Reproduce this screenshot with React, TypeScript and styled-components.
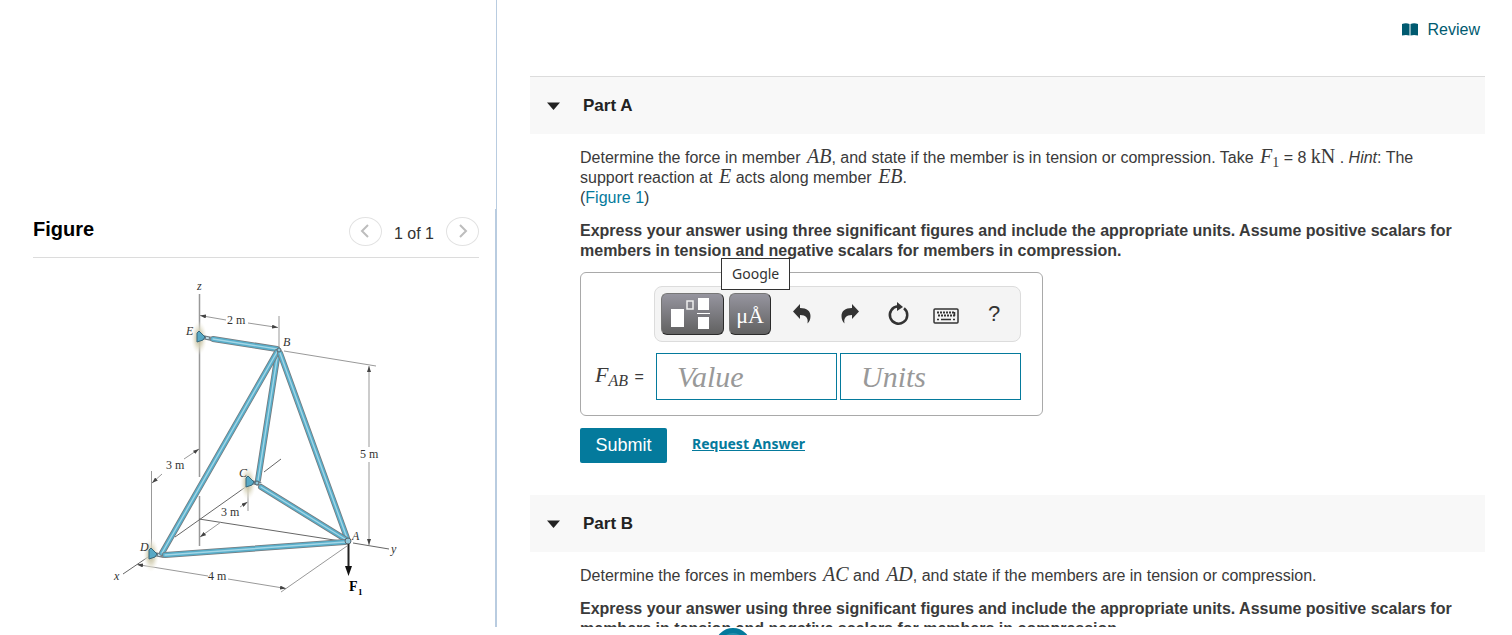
import React from "react";
import styled, { createGlobalStyle } from "styled-components";

const sans = `"Liberation Sans", Arial, sans-serif`;
const serif = `"Liberation Serif", "Times New Roman", serif`;

const GlobalStyle = createGlobalStyle`
  *, *::before, *::after { box-sizing: border-box; }
  body { margin: 0; background: #fff; color: #3a3a3a; font: 16px/20px ${sans}; overflow: hidden; }
  p, h2, h3 { margin: 0; }
  a { color: #047a9c; text-decoration: none; }
`;

const Page = styled.div`
  display: flex;
  flex-direction: column;
  height: 100vh;
`;

const Workspace = styled.div`
  display: grid;
  grid-template-columns: 497px minmax(0, 1fr);
  flex: 1;
  min-height: 0;
`;

const Sidebar = styled.aside`
  display: flex;
  flex-direction: column;
  min-height: 0;
`;

const SidebarTop = styled.div`
  height: 209px;
  border-right: 1px solid #b9cce0;
`;

const FigurePanel = styled.section`
  flex: 1;
  min-height: 0;
  padding: 0 16px 0 33px;
  border-right: 2px solid #b9cce0;
  overflow: hidden;
`;

const FigureHeader = styled.header`
  display: flex;
  align-items: center;
  justify-content: space-between;
  height: 49px;
  padding-bottom: 4px;
  border-bottom: 1px solid #dcdcdc;
`;

const FigureTitle = styled.h2`
  padding-bottom: 4px;
  font-size: 20px;
  line-height: 24px;
  color: #000;
`;

const Pager = styled.nav`
  display: flex;
  align-items: center;
  gap: 12px;
  font-size: 16px;
  color: #333;

  span { padding-top: 5px; }
`;

const PagerButton = styled.button`
  display: grid;
  place-items: center;
  width: 33px;
  height: 29px;
  padding: 0;
  border: 1px solid #e2e2e2;
  border-radius: 50%;
  background: #fff;
`;

const Diagram = styled.svg`
  display: block;
  width: 310px;
  height: 330px;
  margin: 12px 0 0 67px;
  font-family: ${serif};
  font-size: 12px;
`;

const Main = styled.main`
  min-height: 0;
  padding: 0 27px 0 33px;
  overflow: hidden;
`;

const TopBar = styled.div`
  display: flex;
  justify-content: flex-end;
  height: 76px;
  padding: 20px 5px 0 0;
`;

const ReviewLink = styled.a`
  display: flex;
  align-items: center;
  gap: 10px;
  height: 20px;
  && { color: #005a70; }
`;

const PartHeader = styled.header<{ $first?: boolean }>`
  display: flex;
  align-items: center;
  gap: 22px;
  height: ${(p) => (p.$first ? 58 : 57)}px;
  padding-left: 16px;
  background: #f8f8f8;
  border-top: ${(p) => (p.$first ? "1px solid #dcdcdc" : "0")};
`;

const PartToggle = styled.button`
  display: grid;
  place-items: center;
  width: 15px;
  height: 20px;
  padding: 0;
  border: 0;
  background: none;
`;

const PartTitle = styled.h3`
  font-size: 17px;
  line-height: 20px;
  color: #222;
`;

const PartBody = styled.div`
  padding: 14px 0 32px 50px;
`;

const Question = styled.p`
  padding-right: 24px;
`;

const Instructions = styled.p`
  margin-top: 13px;
  font-weight: bold;
`;

const Math = styled.i`
  margin-left: 2px;
  font-family: ${serif};
  font-size: 20px;
  line-height: 16px;
`;

const MathUpright = styled.span`
  font-family: ${serif};
  font-size: 20px;
  font-style: normal;
  line-height: 16px;
`;

const Sub = styled.sub<{ $size: number }>`
  font-size: ${(p) => p.$size}px;
  line-height: 0;
  vertical-align: -4px;
`;

const AnswerBox = styled.form`
  width: 463px;
  margin-top: 11px;
  padding: 13px 21px 15px 14px;
  border: 1px solid #a9a9a9;
  border-radius: 6px;
`;

const Toolbar = styled.div`
  position: relative;
  display: flex;
  align-items: center;
  height: 56px;
  margin-left: 59px;
  padding-left: 6px;
  border: 1px solid #dcdcdc;
  border-radius: 8px;
  background: #f4f4f4;
`;

const PaletteButton = styled.button<{ $width: number }>`
  display: grid;
  place-items: center;
  width: ${(p) => p.$width}px;
  height: 42px;
  margin-right: 5px;
  padding: 0;
  border: 1px solid #2b2b2b;
  border-top-color: #777;
  border-left-color: #777;
  border-radius: 6px;
  background: linear-gradient(#96959f, #616161);
  color: #fff;
  font: 22px/28px ${serif};
`;

const UnitsGlyph = styled.span`
  padding-top: 4px;
`;

const ToolButton = styled.button`
  display: grid;
  place-items: center;
  width: 48px;
  height: 42px;
  padding: 0;
  border: 0;
  background: none;
  color: #333;
  font: 22px/28px ${sans};
`;

const ToolSpacer = styled.div`
  width: 2px;
`;

const Tooltip = styled.div`
  position: absolute;
  top: -29px;
  left: 66px;
  padding: 5px 10px;
  border: 1px solid #333;
  background: #fff;
  color: #333;
  font: 14px/20px "Noto Sans", sans-serif;
`;

const Fields = styled.div`
  display: flex;
  align-items: center;
  gap: 3px;
  margin-top: 11px;
`;

const FieldLabel = styled.label`
  flex: 1;
  white-space: nowrap;
`;

const VariableName = styled.i`
  margin-right: 2px;
  font-family: ${serif};
  font-size: 22px;
  line-height: 16px;
`;

const AnswerInput = styled.input`
  width: 181px;
  height: 47px;
  padding: 0 20px;
  border: 1px solid #047a9c;
  border-radius: 0;
  background: #fff;
  font: italic 30px/36px ${serif};
  color: #333;

  &::placeholder { color: #999; opacity: 1; }
`;

const Actions = styled.div`
  display: flex;
  align-items: center;
  gap: 25px;
  margin-top: 12px;
`;

const SubmitButton = styled.button`
  width: 87px;
  height: 35px;
  padding: 0 0 2px;
  border: 0;
  border-radius: 2px;
  background: #047a9c;
  color: #fff;
  font: 18px/20px ${sans};
`;

const RequestLink = styled.a`
  padding-bottom: 4px;
  font: bold 14px/20px "Noto Sans", sans-serif;
  && { text-decoration: underline; }
`;

const BottomBar = styled.footer`
  position: relative;
  flex: 0 0 8px;
  overflow: hidden;
`;

const Loader = styled.div`
  position: absolute;
  top: 1px;
  left: 715px;
  width: 36px;
  height: 36px;
  border: 5px solid #047a9c;
  border-radius: 50%;
  background: #2590ad;
`;

type Pt = [number, number];

const Bar = ({ from, to, width = 6 }: { from: Pt; to: Pt; width?: number }) => {
  const line = { x1: from[0], y1: from[1], x2: to[0], y2: to[1] };
  return (
    <g strokeLinecap="round">
      <line {...line} stroke="#777a7d" strokeWidth={width} />
      <line {...line} stroke="#58aeca" strokeWidth={width - 1.6} />
      <line {...line} stroke="#a3d6e6" strokeWidth={1.4} />
    </g>
  );
};

const Support = ({ x, y }: { x: number; y: number }) => (
  <g>
    <ellipse cx={x} cy={y + 1} rx="8" ry="17" fill="url(#wall)" />
    <line x1={x + 3} y1={y} x2={x + 13} y2={y + 2} stroke="#6b757c" strokeWidth="4" />
    <line x1={x + 3} y1={y} x2={x + 13} y2={y + 2} stroke="#c3e0ea" strokeWidth="2" strokeDasharray="3 1" />
    <path d={`M${x - 2} ${y - 4} L${x} ${y - 6} L${x + 6} ${y} L${x + 4} ${y + 3} L${x - 2} ${y + 5} Z`} fill="#58a9c5" stroke="#37677a" />
  </g>
);

const dimensionLines = [
  "M226 320L200 315.500",
  "M248 323L278 327.500",
  "M162 474L152 483",
  "M184 459L199 449",
  "M240 507L247.500 502",
  "M221 522L200 537",
  "M208 576L137 564.500",
  "M228 579L286 588.500",
  "M369 447V366",
  "M369 462V545",
];

const Truss = () => (
  <Diagram viewBox="100 270 310 330" role="img" aria-label="Space truss with joints A, B, C, D and E">
    <defs>
      <radialGradient id="wall">
        <stop offset="0" stopColor="#b5af8a" />
        <stop offset="0.5" stopColor="#d9d5bd" stopOpacity="0.8" />
        <stop offset="1" stopColor="#f4f2e8" stopOpacity="0" />
      </radialGradient>
      <marker id="arrow" viewBox="0 0 6 4" refX="6" refY="2" markerWidth="6" markerHeight="4" markerUnits="userSpaceOnUse" orient="auto">
        <path d="M0 0L6 2L0 4Z" fill="#444" />
      </marker>
    </defs>
    <g fill="none" stroke="#999">
      <path d="M199.500 294V477M199.500 496V546" strokeWidth="1.500" />
      <path d="M151.500 471V552M279 316V350M284 351L376 366M248 486V511" />
      <path d="M281 592L347 546" />
    </g>
    <path d="M123 574L151 555M175 537L247 486M264 472L281 459M199 519L347 542M353 543L389 549" fill="none" stroke="#666" />
    <g fill="none" stroke="#999">
      {dimensionLines.map((d) => <path key={d} d={d} markerEnd="url(#arrow)" />)}
    </g>
    <Support x={199} y={337} />
    <Support x={248} y={482} />
    <Support x={151} y={554} />
    <Bar from={[213, 339]} to={[277, 349]} />
    <Bar from={[278, 352]} to={[258, 480]} />
    <Bar from={[277, 352]} to={[162, 553]} />
    <Bar from={[280, 353]} to={[347, 538]} />
    <Bar from={[261, 487]} to={[345, 539]} />
    <Bar from={[165, 555]} to={[345, 542]} />
    <circle cx="279" cy="350" r="2" fill="#90c8da" stroke="#53656e" />
    <circle cx="257" cy="483" r="2" fill="#90c8da" stroke="#53656e" />
    <circle cx="348" cy="541" r="3" fill="#90c8da" stroke="#53656e" />
    <path d="M348.500 544V568" stroke="#222" strokeWidth="2" />
    <path d="M345 566H352L348.500 576Z" fill="#111" />
    <g fill="#333">
      <g fontStyle="italic">
        <text x="197" y="290">z</text>
        <text x="186" y="335">E</text>
        <text x="283" y="346">B</text>
        <text x="239" y="477">C</text>
        <text x="140" y="551">D</text>
        <text x="352" y="540">A</text>
        <text x="391" y="553">y</text>
        <text x="114" y="580">x</text>
      </g>
      <text x="227" y="324">2 m</text>
      <text x="166" y="469">3 m</text>
      <text x="221" y="516">3 m</text>
      <text x="208" y="580">4 m</text>
      <text x="360" y="458">5 m</text>
      <text x="349" y="591" fontSize="14" fontWeight="bold" fill="#000">F</text>
      <text x="358" y="595" fontSize="9" fontWeight="bold" fill="#000">1</text>
    </g>
  </Diagram>
);

const Chevron = ({ d }: { d: string }) => (
  <svg width="10" height="14" viewBox="0 0 10 14" fill="none" stroke="#bdbdbd" strokeWidth="2" aria-hidden="true">
    <path d={d} />
  </svg>
);

const Caret = () => (
  <svg width="13" height="8" viewBox="0 0 13 8" aria-hidden="true">
    <path d="M0 0.500H13L6.500 8Z" fill="#222" />
  </svg>
);

const BookIcon = () => (
  <svg width="16" height="14" viewBox="0 0 16 14" fill="#005a70" aria-hidden="true">
    <path d="M0 1Q4 -.5 7.500 1V12.500Q4 11.500 0 12.500ZM8.500 1Q12 -.5 16 1V12.500Q12 11.500 8.500 12.500Z" />
  </svg>
);

const TemplateIcon = () => (
  <svg width="43" height="34" viewBox="0 0 43 34" aria-hidden="true">
    <path d="M0 12H13V30H0ZM27 1H38V13H27ZM27 20H38V32H27Z" fill="#fff" />
    <path d="M26 16.500H39" stroke="#fff" strokeWidth="1" />
    <path d="M16 4H22V12H16Z" fill="none" stroke="#eee" strokeWidth="1.500" />
  </svg>
);

const TurnArrow = ({ flip }: { flip?: boolean }) => (
  <svg width="18" height="20" viewBox="0 0 18 20" aria-hidden="true">
    <path transform={flip ? "translate(18 0) scale(-1 1)" : undefined} d="M0 7.500L7 0V4C14 4 17.500 7 17.500 12C17.500 15 16.500 17.500 14.500 19.500C15.500 14 13 11 7 11V15Z" fill="#333" />
  </svg>
);

const ResetIcon = () => (
  <svg width="22" height="24" viewBox="0 0 22 24" aria-hidden="true">
    <path d="M17 6.200A8.700 8.700 0 1 1 11 4.300" fill="none" stroke="#333" strokeWidth="2.500" />
    <path d="M10 0L16 5L10 9Z" fill="#333" />
  </svg>
);

const KeyboardIcon = () => (
  <svg width="26" height="20" viewBox="0 0 26 20" fill="none" stroke="#333" aria-hidden="true">
    <rect x="1" y="5" width="24" height="14" rx="1" strokeWidth="1.500" />
    <path d="M4 8.500H22M5 11.500H22" strokeWidth="2" strokeDasharray="2 1" />
    <path d="M4 15.500H6M8 15.500H18M20 15.500H22M21.500 8V12" strokeWidth="1.500" />
  </svg>
);

export default function App() {
  return (
    <Page>
      <GlobalStyle />
      <Workspace>
        <Sidebar>
          <SidebarTop />
          <FigurePanel>
            <FigureHeader>
              <FigureTitle>Figure</FigureTitle>
              <Pager aria-label="Figures">
                <PagerButton aria-label="Previous figure"><Chevron d="M8 1L2 7L8 13" /></PagerButton>
                <span>1 of 1</span>
                <PagerButton aria-label="Next figure"><Chevron d="M2 1L8 7L2 13" /></PagerButton>
              </Pager>
            </FigureHeader>
            <Truss />
          </FigurePanel>
        </Sidebar>
        <Main>
          <TopBar>
            <ReviewLink href="#review"><BookIcon />Review</ReviewLink>
          </TopBar>
          <section>
            <PartHeader $first>
              <PartToggle aria-label="Collapse Part A"><Caret /></PartToggle>
              <PartTitle>Part A</PartTitle>
            </PartHeader>
            <PartBody>
              <Question>
                Determine the force in member <Math>AB</Math>, and state if the member is in tension or compression. Take{" "}
                <Math>F<MathUpright><Sub $size={14}>1</Sub></MathUpright></Math> = 8 <MathUpright>kN</MathUpright> . <i>Hint</i>: The support
                reaction at <Math>E</Math> acts along member <Math>EB</Math>.
              </Question>
              <p>(<a href="#figure-1">Figure 1</a>)</p>
              <Instructions>
                Express your answer using three significant figures and include the appropriate units. Assume positive scalars for
                members in tension and negative scalars for members in compression.
              </Instructions>
              <AnswerBox onSubmit={(e) => e.preventDefault()} id="answer-a">
                <Toolbar>
                  <PaletteButton type="button" $width={63} aria-label="Templates"><TemplateIcon /></PaletteButton>
                  <PaletteButton type="button" $width={42}><UnitsGlyph>μÅ</UnitsGlyph></PaletteButton>
                  <ToolSpacer />
                  <ToolButton type="button" aria-label="Undo"><TurnArrow /></ToolButton>
                  <ToolButton type="button" aria-label="Redo"><TurnArrow flip /></ToolButton>
                  <ToolButton type="button" aria-label="Reset"><ResetIcon /></ToolButton>
                  <ToolButton type="button" aria-label="Keyboard shortcuts"><KeyboardIcon /></ToolButton>
                  <ToolButton type="button">?</ToolButton>
                  <Tooltip role="tooltip">Google</Tooltip>
                </Toolbar>
                <Fields>
                  <FieldLabel htmlFor="value-a">
                    <VariableName>F<Sub $size={16}>AB</Sub></VariableName> =
                  </FieldLabel>
                  <AnswerInput id="value-a" placeholder="Value" />
                  <AnswerInput aria-label="Units" placeholder="Units" />
                </Fields>
              </AnswerBox>
              <Actions>
                <SubmitButton type="submit" form="answer-a">Submit</SubmitButton>
                <RequestLink href="#request">Request Answer</RequestLink>
              </Actions>
            </PartBody>
          </section>
          <section>
            <PartHeader>
              <PartToggle aria-label="Collapse Part B"><Caret /></PartToggle>
              <PartTitle>Part B</PartTitle>
            </PartHeader>
            <PartBody>
              <Question>
                Determine the forces in members <Math>AC</Math> and <Math>AD</Math>, and state if the members are in tension or
                compression.
              </Question>
              <Instructions>
                Express your answer using three significant figures and include the appropriate units. Assume positive scalars for
                members in tension and negative scalars for members in compression.
              </Instructions>
            </PartBody>
          </section>
        </Main>
      </Workspace>
      <BottomBar><Loader /></BottomBar>
    </Page>
  );
}
